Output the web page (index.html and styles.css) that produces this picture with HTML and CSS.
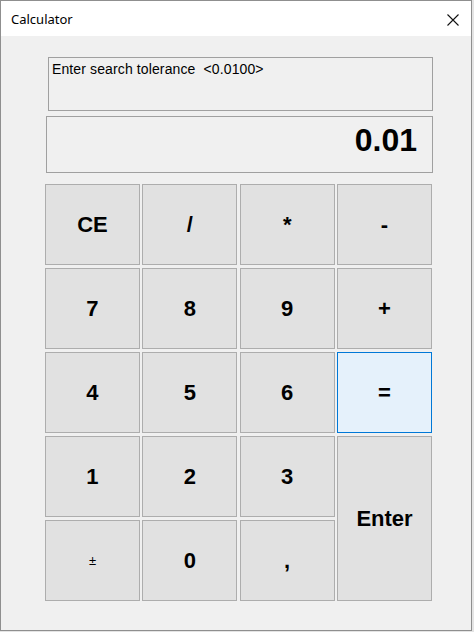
FILE: index.html
```html
<!DOCTYPE html>
<html lang="en">
<head>
<meta charset="utf-8">
<title>Calculator</title>
<link rel="stylesheet" href="styles.css">
</head>
<body>
<div class="window">
  <div class="titlebar">
    <span class="title">Calculator</span>
    <svg class="close" width="12" height="12" viewBox="0 0 12 12"><path d="M0.5 0.5 L11.5 11.5 M11.5 0.5 L0.5 11.5" stroke="#111" stroke-width="1.1" fill="none"/></svg>
  </div>
  <div class="content">
    <div class="prompt">Enter search tolerance&nbsp; &lt;0.0100&gt;</div>
    <div class="display">0.01</div>
    <div class="keypad">
      <button class="key">CE</button>
      <button class="key">/</button>
      <button class="key">*</button>
      <button class="key">-</button>
      <button class="key">7</button>
      <button class="key">8</button>
      <button class="key">9</button>
      <button class="key">+</button>
      <button class="key">4</button>
      <button class="key">5</button>
      <button class="key">6</button>
      <button class="key key-focus">=</button>
      <button class="key">1</button>
      <button class="key">2</button>
      <button class="key">3</button>
      <button class="key key-enter">Enter</button>
      <button class="key key-small">±</button>
      <button class="key">0</button>
      <button class="key">,</button>
    </div>
  </div>
</div>
</body>
</html>
```

FILE: styles.css
```css
html, body {
  margin: 0;
  padding: 0;
}
body {
  background: #e4e4e4;
  width: 474px;
  height: 632px;
  overflow: hidden;
}
.window {
  box-sizing: border-box;
  width: 472px;
  height: 631px;
  border: 1px solid #8f8f8f;
  background: #f0f0f0;
  display: flex;
  flex-direction: column;
}
.titlebar {
  height: 35px;
  background: #ffffff;
  display: flex;
  align-items: center;
  justify-content: space-between;
  padding: 0 12px 0 10px;
  flex: none;
}
.title {
  font-family: "Noto Sans", "Open Sans", sans-serif;
  font-size: 13px;
  color: #000;
}
.close {
  display: block;
  margin-top: 3px;
}
.content {
  display: flex;
  flex-direction: column;
  align-items: flex-start;
  padding: 21px 0 0 44px;
  font-family: "Liberation Sans", Arial, sans-serif;
}
.prompt {
  box-sizing: border-box;
  width: 385px;
  height: 54px;
  margin-left: 3px;
  border: 1px solid #a0a0a0;
  padding: 3px 3px;
  font-size: 14px;
  line-height: 16px;
  letter-spacing: 0.12px;
  color: #000;
}
.display {
  box-sizing: border-box;
  width: 387px;
  height: 57px;
  margin: 5px 0 0 1px;
  border: 1px solid #a0a0a0;
  padding: 7px 15px 0 0;
  font-size: 32px;
  line-height: 32px;
  font-weight: bold;
  text-align: right;
  color: #000;
}
.keypad {
  margin-top: 11px;
  width: 387px;
  display: grid;
  grid-template-columns: repeat(4, 1fr);
  grid-template-rows: repeat(5, 81px);
  column-gap: 2.4px;
  row-gap: 3px;
}
.key {
  box-sizing: border-box;
  margin: 0;
  padding: 0;
  background: #e1e1e1;
  border: 1px solid #adadad;
  border-radius: 0;
  font-family: "Liberation Sans", Arial, sans-serif;
  font-size: 22px;
  font-weight: bold;
  color: #000;
  display: flex;
  align-items: center;
  justify-content: center;
}
.key-focus {
  background: #e5f1fb;
  border-color: #0078d7;
}
.key-enter {
  grid-column: 4;
  grid-row: 4 / span 2;
}
.key-small {
  font-size: 13px;
  font-weight: normal;
}
```
